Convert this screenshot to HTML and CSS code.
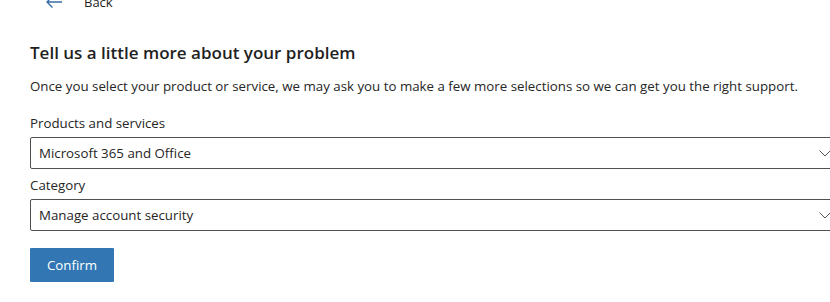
FILE: index.html
```html
<!DOCTYPE html>
<html lang="en">
<head>
<meta charset="utf-8">
<title>Tell us a little more about your problem</title>
<link rel="stylesheet" href="styles.css">
</head>
<body>
<div class="page">
  <a class="back" href="#">
    <svg class="back-icon" width="18" height="14" viewBox="0 0 18 14" aria-hidden="true"><path d="M17 7H2M7.5 1.5L2 7l5.5 5.5" fill="none" stroke="#3a6ea8" stroke-width="1.4"/></svg>
    <span>Back</span>
  </a>
  <h1 class="title">Tell us a little more about your problem</h1>
  <p class="intro">Once you select your product or service, we may ask you to make a few more selections so we can get you the right support.</p>
  <div class="field">
    <label class="label">Products and services</label>
    <div class="select"><span>Microsoft 365 and Office</span><svg class="chev" width="12" height="7" viewBox="0 0 12 7"><path d="M0.5 0.5L6 6L11.5 0.5" fill="none" stroke="#555" stroke-width="1"/></svg></div>
  </div>
  <div class="field">
    <label class="label">Category</label>
    <div class="select"><span>Manage account security</span><svg class="chev" width="12" height="7" viewBox="0 0 12 7"><path d="M0.5 0.5L6 6L11.5 0.5" fill="none" stroke="#555" stroke-width="1"/></svg></div>
  </div>
  <button class="confirm" type="button">Confirm</button>
</div>
</body>
</html>
```
FILE: styles.css
```css
html, body {
  margin: 0;
  padding: 0;
  background: #fff;
  overflow: hidden;
}
body {
  font-family: "Open Sans", "Noto Sans", sans-serif;
  color: #262626;
  width: 830px;
  height: 302px;
}
.page {
  padding-left: 30px;
  display: flex;
  flex-direction: column;
  align-items: flex-start;
}
.back {
  display: flex;
  align-items: center;
  gap: 21px;
  margin-top: -8px;
  margin-left: 15px;
  height: 20px;
  color: #262626;
  text-decoration: none;
  font-size: 13px;
}
.title {
  margin: 29px 0 0;
  font-size: 17px;
  font-weight: 600;
  line-height: 24px;
  color: #1f1f1f;
}
.intro {
  margin: 11px 0 0;
  font-size: 13.3px;
  line-height: 20px;
}
.field {
  display: flex;
  flex-direction: column;
}
.label {
  font-size: 13.3px;
  line-height: 20px;
  margin-top: 17px;
  margin-bottom: 4px;
}
.field + .field .label {
  margin-top: 6px;
}
.select {
  box-sizing: border-box;
  height: 32px;
  width: 812px;
  border: 1px solid #505050;
  border-radius: 2px;
  display: flex;
  align-items: center;
  justify-content: space-between;
  padding: 0 10px 0 8px;
  font-size: 13.3px;
}
.chev {
  flex: none;
}
.confirm {
  margin-top: 17px;
  width: 84px;
  height: 34px;
  border: none;
  border-radius: 1px;
  background: #3277b4;
  color: #fff;
  font-family: inherit;
  font-size: 13.3px;
  padding: 0;
}
```
